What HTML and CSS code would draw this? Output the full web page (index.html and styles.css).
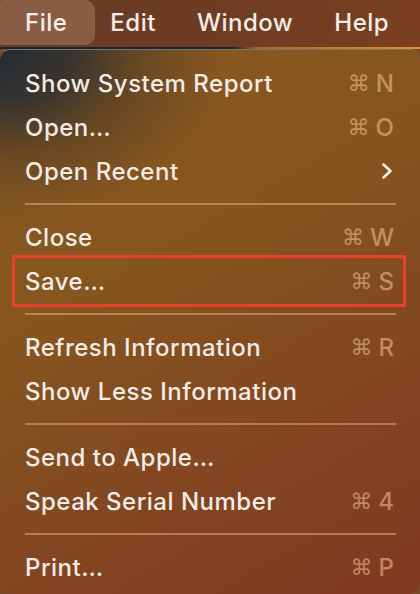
FILE: index.html
```html
<!DOCTYPE html>
<html>
<head>
<meta charset="utf-8">
<link rel="stylesheet" href="styles.css">
</head>
<body>
<div class="menubar">
  <div class="mb-item active">File</div>
  <div class="mb-item">Edit</div>
  <div class="mb-item">Window</div>
  <div class="mb-item">Help</div>
</div>
<div class="edge"></div>
<div class="menu">
  <div class="row"><span class="label">Show System Report</span><span class="sc"><span class="cmd">⌘</span>N</span></div>
  <div class="row"><span class="label">Open…</span><span class="sc"><span class="cmd">⌘</span>O</span></div>
  <div class="row"><span class="label">Open Recent</span><svg class="chev" width="12" height="18" viewBox="0 0 12 18"><path d="M2.5 2.5 L9.5 9 L2.5 15.5" fill="none" stroke="#f2ece6" stroke-width="2.6" stroke-linecap="round" stroke-linejoin="round"/></svg></div>
  <div class="sep"></div>
  <div class="row"><span class="label">Close</span><span class="sc"><span class="cmd">⌘</span>W</span></div>
  <div class="row boxed"><span class="label">Save…</span><span class="sc"><span class="cmd">⌘</span>S</span></div>
  <div class="sep"></div>
  <div class="row"><span class="label">Refresh Information</span><span class="sc"><span class="cmd">⌘</span>R</span></div>
  <div class="row"><span class="label">Show Less Information</span></div>
  <div class="sep"></div>
  <div class="row"><span class="label">Send to Apple…</span></div>
  <div class="row"><span class="label">Speak Serial Number</span><span class="sc"><span class="cmd">⌘</span>4</span></div>
  <div class="sep"></div>
  <div class="row"><span class="label">Print…</span><span class="sc"><span class="cmd">⌘</span>P</span></div>
</div>
</body>
</html>
```
FILE: styles.css
```css
html, body {
  margin: 0;
  padding: 0;
  width: 420px;
  height: 594px;
  overflow: hidden;
  background: #7b4a22;
  font-family: Inter, "Noto Sans", "DejaVu Sans", sans-serif;
  -webkit-font-smoothing: antialiased;
}
.menubar {
  height: 47px;
  display: flex;
  align-items: stretch;
  background: linear-gradient(90deg, #6a3a26 0%, #6e3c24 50%, #7a3f20 100%);
  color: #f3ece8;
  font-size: 24px;
  font-weight: 500;
  letter-spacing: 0.5px;
}
.mb-item {
  display: flex;
  align-items: center;
  height: 45px;
  padding: 0 26px 0 15px;
}
.mb-item:first-child {
  padding-left: 25px;
  padding-right: 28px;
}
.mb-item.active {
  background: #8a5b45;
  border-radius: 2px 10px 10px 2px;
}
.edge {
  height: 2px;
  background: linear-gradient(90deg, #17263a 0%, #1d2530 55%, #a86a2a 62%, #e0902e 100%);
}
.menu {
  height: 545px;
  box-sizing: border-box;
  padding-top: 11px;
  border-top: 1px solid #7d7468;
  border-radius: 10px 10px 12px 12px;
  background:
    radial-gradient(ellipse 230px 170px at 0% 0%, rgba(36,44,52,1) 0%, rgba(40,44,48,0.85) 30%, rgba(60,48,36,0.4) 62%, rgba(60,48,36,0) 100%),
    linear-gradient(150deg, #8a5a22 0%, #87561f 35%, #834a21 60%, #80391f 100%);
  color: #f2ebe6;
  font-size: 24px;
  font-weight: 500;
  letter-spacing: 0.5px;
}
.row {
  height: 44px;
  margin: 0 18px 0 16px;
  padding: 0 8px 0 9px;
  display: flex;
  align-items: center;
  justify-content: space-between;
}
.sc {
  color: rgba(255, 210, 165, 0.5);
  display: flex;
  align-items: center;
  gap: 6px;
  letter-spacing: 0;
}
.cmd {
  font-family: "DejaVu Sans", sans-serif;
  font-size: 22px;
  font-weight: 400;
}
.chev {
  margin-right: 1px;
}
.boxed {
  outline: 3px solid #e8402a;
  outline-offset: 1px;
}
.sep {
  height: 22px;
  margin: 0 24px 0 25px;
  display: flex;
  align-items: center;
}
.sep::before {
  content: "";
  display: block;
  width: 100%;
  height: 2px;
  background: rgba(230, 170, 120, 0.55);
}
```
